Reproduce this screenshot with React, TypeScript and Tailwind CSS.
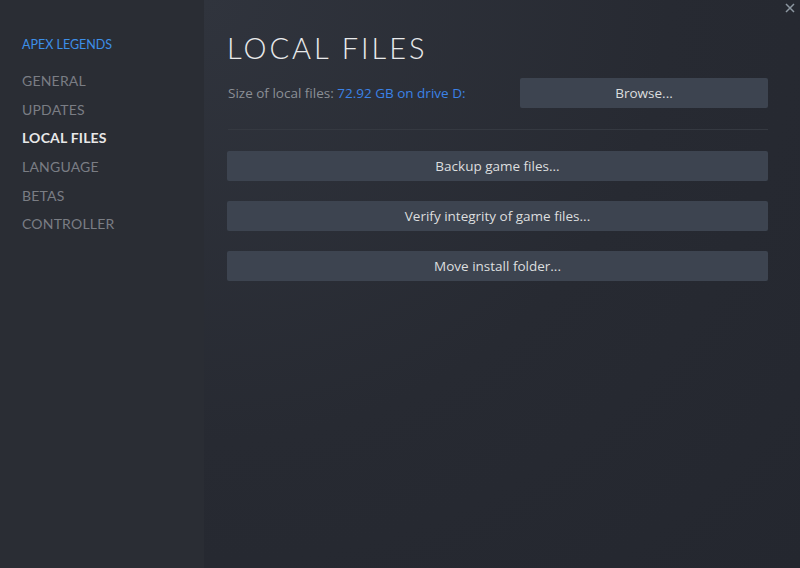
import React from 'react';

const NAV = ['GENERAL', 'UPDATES', 'LOCAL FILES', 'LANGUAGE', 'BETAS', 'CONTROLLER'];

const ActionButton: React.FC<{ label: string; className?: string }> = ({ label, className = '' }) => (
  <button className={`h-[30px] rounded-[2px] bg-[#3d4450] font-['Open_Sans','Noto_Sans',sans-serif] text-[13.5px] text-[#dcdedf] ${className}`}>
    {label}
  </button>
);

export default function App() {
  return (
    <div className="flex h-[568px] w-[800px] overflow-hidden font-['Lato','Noto_Sans',sans-serif]">
      {/* sidebar */}
      <aside className="flex w-[204px] shrink-0 flex-col bg-[#2a2d34] pl-[22px] pt-[38px]">
        <div className="text-[12.5px] leading-[14px] text-[#3d8fe8]">APEX LEGENDS</div>
        <nav className="mt-[15px] flex flex-col">
          {NAV.map((item) => (
            <div
              key={item}
              className={`h-[28.7px] text-[14px] leading-[28.7px] tracking-[0.2px] ${item === 'LOCAL FILES' ? 'font-bold text-[#e8e8e8]' : 'text-[#7a7d84]'}`}
            >
              {item}
            </div>
          ))}
        </nav>
      </aside>

      {/* main */}
      <main className="relative flex flex-1 flex-col bg-[radial-gradient(ellipse_at_top_left,#30343d_0%,#272a32_55%,#24272f_100%)] pl-[23px] pr-[32px] pt-[31px]">
        <button className="absolute right-[5px] top-[3px] text-[#8d97a1]" aria-label="Close">
          <svg width="10" height="10" viewBox="0 0 10 10" fill="none" stroke="currentColor" strokeWidth="1.5">
            <path d="M1 1l8 8M9 1l-8 8" />
          </svg>
        </button>

        <h1 className="text-[29px] font-light leading-[34px] tracking-[3px] text-[#e9eaeb]">LOCAL FILES</h1>

        <div className="mt-[13px] flex items-center">
          <div className="flex-1 pl-px font-['Open_Sans','Noto_Sans',sans-serif] text-[13.5px] text-[#8b8f96]">
            Size of local files: <span className="text-[#3b82e6]">72.92 GB on drive D:</span>
          </div>
          <ActionButton label="Browse..." className="w-[248px]" />
        </div>

        <div className="ml-px mt-[21px] h-px bg-[#353941]" />

        <div className="mt-[21px] flex flex-col gap-[20px]">
          <ActionButton label="Backup game files..." />
          <ActionButton label="Verify integrity of game files..." />
          <ActionButton label="Move install folder..." />
        </div>
      </main>
    </div>
  );
}
